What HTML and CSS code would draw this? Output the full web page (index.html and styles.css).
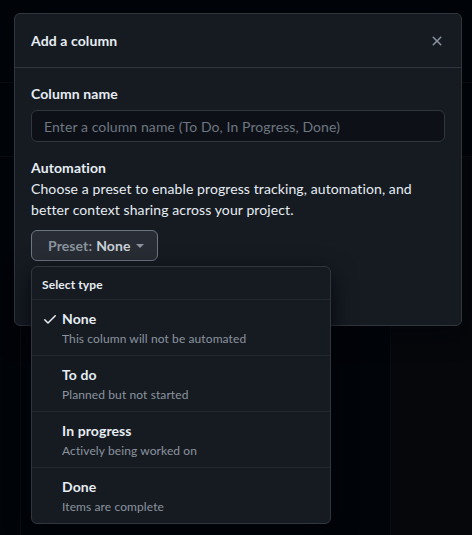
FILE: index.html
```html
<!DOCTYPE html>
<html lang="en">

<head>
  <meta charset="UTF-8">
  <meta name="viewport" content="width=device-width, initial-scale=1.0">
  <title>Add a column</title>
  <link rel="stylesheet" href="styles.css">
</head>

<body>
  <!-- Quadro ao fundo (escurecido) -->
  <div class="board">
    <div class="board-top"></div>
    <div class="board-bar"></div>
    <div class="board-cols">
      <div class="board-gutter"></div>
      <div class="board-col"></div>
      <div class="board-rest"></div>
    </div>
  </div>

  <!-- Dialogo -->
  <section class="dialog">
    <header class="dialog-header">
      <h1 class="dialog-title">Add a column</h1>
      <button class="close-btn" aria-label="Close">
        <svg width="16" height="16" viewBox="0 0 16 16" fill="currentColor">
          <path d="M3.72 3.72a.75.75 0 0 1 1.06 0L8 6.94l3.22-3.22a.749.749 0 0 1 1.275.326.749.749 0 0 1-.215.734L9.06 8l3.22 3.22a.749.749 0 0 1-.326 1.275.749.749 0 0 1-.734-.215L8 9.06l-3.22 3.22a.751.751 0 0 1-1.042-.018.751.751 0 0 1-.018-1.042L6.94 8 3.72 4.78a.75.75 0 0 1 0-1.06Z"></path>
        </svg>
      </button>
    </header>

    <div class="dialog-body">
      <label class="field-label" for="columnName">Column name</label>
      <input class="text-input" type="text" id="columnName" placeholder="Enter a column name (To Do, In Progress, Done)">

      <h2 class="field-label automation-label">Automation</h2>
      <p class="field-note">Choose a preset to enable progress tracking, automation, and better context sharing across your project.</p>

      <div class="preset">
        <button class="preset-btn">
          <span class="preset-key">Preset:</span> None
          <span class="caret"></span>
        </button>

        <!-- Menu do preset -->
        <div class="menu">
          <div class="menu-header">Select type</div>
          <ul class="menu-list">
            <li class="menu-item">
              <span class="menu-check">
                <svg width="16" height="16" viewBox="0 0 16 16" fill="currentColor">
                  <path d="M13.78 4.22a.75.75 0 0 1 0 1.06l-7.25 7.25a.75.75 0 0 1-1.06 0L2.22 9.28a.751.751 0 0 1 .018-1.042.751.751 0 0 1 1.042-.018L6 10.94l6.72-6.72a.75.75 0 0 1 1.060 0Z"></path>
                </svg>
              </span>
              <span class="menu-text">
                <span class="menu-title">None</span>
                <span class="menu-desc">This column will not be automated</span>
              </span>
            </li>
            <li class="menu-item">
              <span class="menu-check"></span>
              <span class="menu-text">
                <span class="menu-title">To do</span>
                <span class="menu-desc">Planned but not started</span>
              </span>
            </li>
            <li class="menu-item">
              <span class="menu-check"></span>
              <span class="menu-text">
                <span class="menu-title">In progress</span>
                <span class="menu-desc">Actively being worked on</span>
              </span>
            </li>
            <li class="menu-item">
              <span class="menu-check"></span>
              <span class="menu-text">
                <span class="menu-title">Done</span>
                <span class="menu-desc">Items are complete</span>
              </span>
            </li>
          </ul>
        </div>
      </div>
    </div>
  </section>
</body>

</html>
```

FILE: styles.css
```css
/* Estilos gerais */
body {
  margin: 0;
  width: 472px;
  height: 535px;
  overflow: hidden;
  background: #010409;
  font-family: Lato, "Noto Sans", sans-serif;
  letter-spacing: 0.1px;
  color: #e6edf3;
  position: relative;
}

/* Quadro ao fundo */
.board {
  display: flex;
  flex-direction: column;
  height: 100%;
}

.board-top {
  height: 82px;
  border-bottom: 1px solid #0b0e13;
}

.board-bar {
  height: 73px;
  border-bottom: 1px solid #0b0e13;
}

.board-cols {
  flex: 1;
  display: flex;
}

.board-gutter {
  width: 20px;
  border-right: 1px solid #0b0e13;
}

.board-col {
  width: 369px;
  border-right: 1px solid #0a0d12;
}

.board-rest {
  flex: 1;
  background: #05070b;
}

/* Dialogo */
.dialog {
  position: absolute;
  left: 14px;
  top: 13px;
  width: 446px;
  height: 311px;
  background: #161b22;
  border: 1px solid #30363d;
  border-radius: 6px;
  box-shadow: 0 8px 24px rgba(1, 4, 9, 0.75);
}

.dialog-header {
  display: flex;
  align-items: center;
  justify-content: space-between;
  height: 53px;
  padding: 0 16px;
  border-bottom: 1px solid #30363d;
}

.dialog-title {
  margin: 0;
  font-size: 14px;
  font-weight: 700;
  color: #e6edf3;
}

.close-btn {
  display: flex;
  align-items: center;
  justify-content: center;
  width: 32px;
  height: 32px;
  margin-right: -8px;
  padding: 0;
  border: none;
  background: none;
  color: #8b949e;
}

.dialog-body {
  padding: 16px 16px 0;
}

.field-label {
  display: block;
  margin: 0;
  font-size: 14px;
  line-height: 20px;
  font-weight: 700;
  color: #e6edf3;
}

.text-input {
  display: block;
  box-sizing: border-box;
  width: 100%;
  height: 32px;
  margin-top: 6px;
  padding: 0 12px;
  background: #0d1117;
  border: 1px solid #30363d;
  border-radius: 6px;
  font-family: inherit;
  font-size: 14px;
  letter-spacing: 0.1px;
  color: #e6edf3;
}

.text-input::placeholder {
  color: #6e7681;
}

.automation-label {
  margin-top: 16px;
}

.field-note {
  margin: 0;
  font-size: 14px;
  line-height: 21px;
  color: #e6edf3;
}

/* Botao do preset */
.preset {
  position: relative;
  margin-top: 10px;
}

.preset-btn {
  display: inline-flex;
  align-items: center;
  gap: 4px;
  height: 31px;
  padding: 0 13px 0 16px;
  background: #282d35;
  border: 1px solid #6e7681;
  border-radius: 6px;
  font-family: inherit;
  font-size: 14px;
  font-weight: 700;
  letter-spacing: 0.1px;
  color: #c9d1d9;
}

.preset-key {
  color: #8b949e;
}

.caret {
  width: 0;
  height: 0;
  border-left: 4px solid transparent;
  border-right: 4px solid transparent;
  border-top: 4px solid #8b949e;
  margin-left: 1px;
}

/* Menu */
.menu {
  position: absolute;
  left: 0;
  top: 36px;
  width: 298px;
  background: #161b22;
  border: 1px solid #30363d;
  border-radius: 6px;
  box-shadow: 0 8px 24px rgba(1, 4, 9, 0.85);
  overflow: hidden;
}

.menu-header {
  height: 32px;
  line-height: 35px;
  padding: 0 10px;
  border-bottom: 1px solid #21262d;
  font-size: 12px;
  font-weight: 700;
  color: #e6edf3;
}

.menu-list {
  list-style: none;
  margin: 0;
  padding: 0;
}

.menu-item {
  display: flex;
  gap: 4px;
  padding: 9px 16px 6px 10px;
  border-bottom: 1px solid #21262d;
}

.menu-item:last-child {
  border-bottom: none;
}

.menu-check {
  width: 16px;
  height: 20px;
  display: flex;
  align-items: center;
  color: #e6edf3;
}

.menu-text {
  display: flex;
  flex-direction: column;
}

.menu-title {
  font-size: 14px;
  line-height: 20px;
  font-weight: 700;
  color: #e6edf3;
}

.menu-desc {
  font-size: 12px;
  line-height: 20px;
  color: #8b949e;
}
```
